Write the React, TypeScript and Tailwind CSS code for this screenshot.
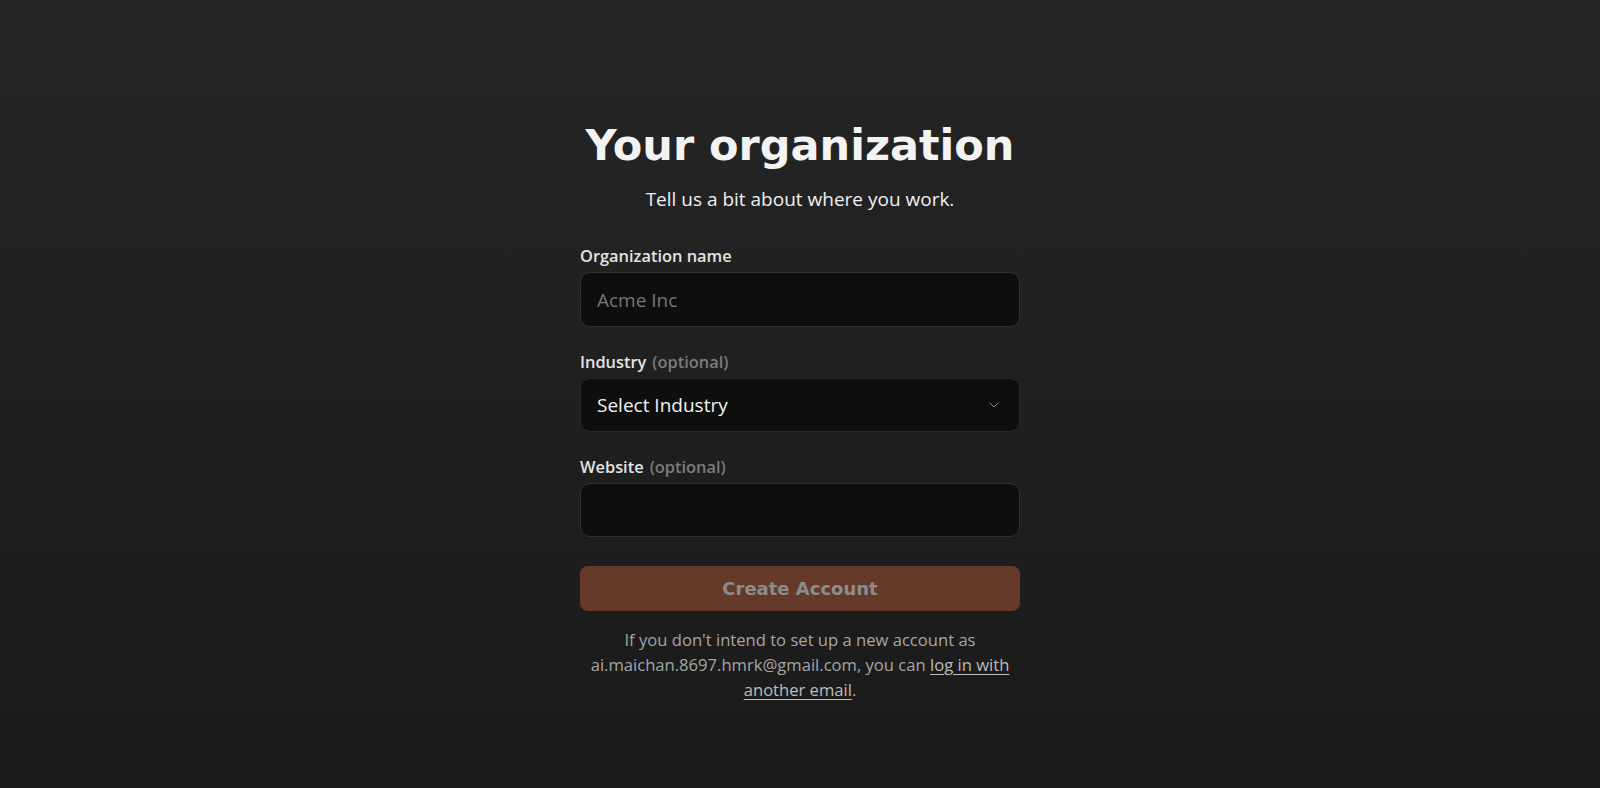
import { ChevronDown } from "lucide-react";

const body = { fontFamily: "'Open Sans', 'Noto Sans', sans-serif" };
const display = { fontFamily: "'DejaVu Sans', 'Liberation Sans', sans-serif" };

function Label({ text, optional }: { text: string; optional?: boolean }) {
  return (
    <label className="mb-[4px] block text-[16.4px] font-semibold leading-[24px] text-[#e4e4e4]">
      {text}
      {optional && <span className="ml-[6px] text-[#7c7c7c]">(optional)</span>}
    </label>
  );
}

export default function App() {
  return (
    <div
      className="flex min-h-screen w-full flex-col items-center bg-gradient-to-b from-[#252525] to-[#1a1a1a] pt-[120px]"
      style={body}
    >
      <div className="flex w-[440px] flex-col">
        <h1
          className="text-center text-[43px] font-bold leading-[50px] text-[#f3f3f3]"
          style={display}
        >
          Your organization
        </h1>
        <p className="mt-[16px] text-center text-[19px] leading-[26px] text-[#f0f0f0]">
          Tell us a bit about where you work.
        </p>

        <div className="mt-[32px] flex flex-col gap-[23px]">
          <div>
            <Label text="Organization name" />
            <input
              placeholder="Acme Inc"
              className="h-[55px] w-full rounded-[10px] border border-[#303030] bg-[#0e0e0e] px-[16px] text-[19px] text-[#eeeeee] outline-none placeholder:text-[#767676]"
            />
          </div>
          <div>
            <Label text="Industry" optional />
            <button className="flex h-[54px] w-full items-center justify-between rounded-[10px] border border-[#262626] bg-[#0e0e0e] pl-[16px] pr-[17px] text-left text-[19px] text-[#f2f2f2]">
              <span>Select Industry</span>
              <ChevronDown className="h-[16px] w-[16px] text-[#8a8a8a]" strokeWidth={1.5} />
            </button>
          </div>
          <div>
            <Label text="Website" optional />
            <input className="h-[54px] w-full rounded-[10px] border border-[#303030] bg-[#0e0e0e] px-[16px] text-[19px] text-[#eeeeee] outline-none" />
          </div>
        </div>

        <button
          className="mt-[29px] h-[45px] w-full rounded-[8px] bg-[#663a28] text-[18px] font-bold text-[#8c8c8c]"
          style={display}
        >
          Create Account
        </button>

        <p className="mt-[16px] text-center text-[16.6px] leading-[25px] text-[#a6a6a6]">
          If you don't intend to set up a new account as ai.maichan.8697.hmrk@gmail.com, you can{" "}
          <a href="#" className="text-[#bdbdbd] underline underline-offset-[3px]">
            log in with another email
          </a>
          .
        </p>
      </div>
    </div>
  );
}
